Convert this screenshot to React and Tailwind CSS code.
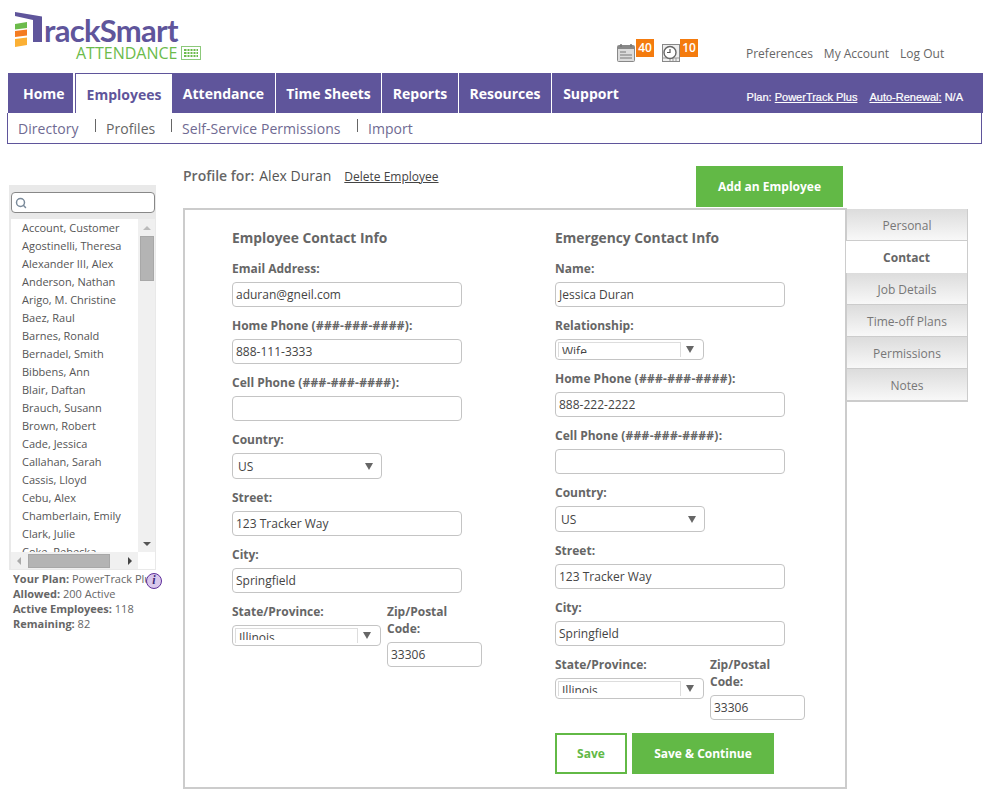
import { Search } from "lucide-react";

const employees = [
  "Account, Customer", "Agostinelli, Theresa", "Alexander III, Alex", "Anderson, Nathan", "Arigo, M. Christine",
  "Baez, Raul", "Barnes, Ronald", "Bernadel, Smith", "Bibbens, Ann", "Blair, Daftan", "Brauch, Susann",
  "Brown, Robert", "Cade, Jessica", "Callahan, Sarah", "Cassis, Lloyd", "Cebu, Alex", "Chamberlain, Emily",
  "Clark, Julie", "Coke, Rebecka",
];

const navItems = [
  { label: "Home", cls: "w-[65px] pl-[15px] bg-[#5f559b] text-white" },
  { label: "Employees", cls: "w-[97px] ml-[2px] justify-center bg-white text-[#5f559b] border-l border-t border-[#5f559b] pt-[2px]" },
  { label: "Attendance", cls: "w-[103px] justify-center bg-[#5f559b] text-white" },
  { label: "Time Sheets", cls: "w-[105px] ml-px justify-center bg-[#5f559b] text-white" },
  { label: "Reports", cls: "w-[76px] ml-px justify-center bg-[#5f559b] text-white" },
  { label: "Resources", cls: "w-[92px] ml-px justify-center bg-[#5f559b] text-white" },
  { label: "Support", cls: "w-[78px] ml-px justify-center bg-[#5f559b] text-white" },
];

const tabs = ["Personal", "Contact", "Job Details", "Time-off Plans", "Permissions", "Notes"];

const Label = ({ children }) => (
  <div className="h-[18px] mb-[5px] text-[12px] leading-[20px] font-bold text-[#666]">{children}</div>
);

const Field = ({ label, value }) => (
  <div className="mb-[9px]">
    <Label>{label}</Label>
    <div className="w-[230px] h-[25px] px-[3px] text-[12px] leading-[23px] text-[#444] bg-white border border-[#c4c4c4] rounded-[4px]">{value}</div>
  </div>
);

const Phone = ({ kind }) => (
  <>{kind} Phone <span className="tracking-[0.3px]">(###-###-####):</span></>
);

const Arrow = () => <span className="w-0 h-0 border-x-[4px] border-x-transparent border-t-[7px] border-t-[#666]" />;

const CountrySelect = ({ label }) => (
  <div className="mb-[9px]">
    <Label>{label}</Label>
    <div className="flex items-center justify-between w-[150px] h-[26px] pl-[5px] pr-[8px] pt-[1px] text-[12px] text-[#444] bg-white border border-[#c4c4c4] rounded-[4px]">
      US
      <Arrow />
    </div>
  </div>
);

const ClippedSelect = ({ value }) => (
  <div className="flex items-center justify-between w-[149px] h-[21px] pl-[2px] pr-[9px] bg-white border border-[#c4c4c4] rounded-[4px]">
    <div className="w-[123px] h-[15px] pl-[3px] border border-b-0 border-[#ddd]">
      <div className="h-[11px] overflow-hidden text-[12px] leading-[18px] text-[#444]">{value}</div>
    </div>
    <Arrow />
  </div>
);

const StateZip = () => (
  <div className="flex">
    <div className="w-[155px]">
      <Label>State/Province:</Label>
      <ClippedSelect value="Illinois" />
    </div>
    <div>
      <div className="h-[35px] mb-[5px] pt-[1px] text-[12px] leading-[17px] font-bold text-[#666]">Zip/Postal<br />Code:</div>
      <div className="w-[95px] h-[25px] px-[3px] text-[12px] leading-[23px] text-[#444] bg-white border border-[#c4c4c4] rounded-[4px]">33306</div>
    </div>
  </div>
);

const Logo = () => (
  <div className="flex items-start w-[200px] pl-[15px] pt-[12px]">
    <svg width="28" height="36" viewBox="0 0 28 36" className="shrink-0">
      <path d="M0 0 L27 4.5 L27 30 L18 30 L18 8 L0 4 Z" fill="#5f559b" />
      <path d="M0 12 L12 10 L12 16 L0 17.5 Z" fill="#6cbb4b" />
      <path d="M0 19 L12 17.5 L12 23.5 L0 25 Z" fill="#f47b20" />
      <path d="M0 27 L12 25.5 L12 33 L0 35 Z" fill="#fbb034" />
    </svg>
    <div className="ml-[1px]">
      <div className="h-[33px] text-[31px] leading-[37px] font-bold tracking-[-0.7px] text-[#5f559b] font-['Lato',sans-serif]">rackSmart</div>
      <div className="flex items-center h-[16px] ml-[32px] whitespace-nowrap">
        <span className="text-[16px] leading-[16px] text-[#6cbb4b]">ATTENDANCE</span>
        <svg width="20" height="14" viewBox="0 0 20 14" className="ml-[4px] shrink-0">
          <rect x="0.5" y="0.5" width="19" height="13" fill="#fff" stroke="#8cc97a" />
          <path d="M3 3h14v2H3zM3 6h14v2H3zM3 9h14v2H3z" fill="#6cbb4b" />
          <path d="M6 3v8M9 3v8M12 3v8M15 3v8" stroke="#fff" />
        </svg>
      </div>
    </div>
  </div>
);

const Badge = ({ children }) => (
  <span className="w-[18px] h-[18px] -mt-[4px] bg-[#f47b0e] text-white text-[12px] leading-[18px] text-center font-semibold">{children}</span>
);

export default function App() {
  return (
    <div className="w-[989px] h-[800px] overflow-hidden bg-white font-['Open_Sans',sans-serif]">
      {/* Header */}
      <div className="flex h-[73px]">
        <Logo />
        <div className="flex items-start pt-[43px] ml-[417px]">
          <svg width="18" height="19" viewBox="0 0 18 19" className="mr-px">
            <rect x="0.5" y="2.5" width="17" height="16" rx="1" fill="#dcdcdc" stroke="#888" />
            <rect x="1" y="3" width="16" height="3" fill="#888" />
            <path d="M3 9h6M3 12h12M3 15h12" stroke="#999" strokeWidth="1.5" />
            <path d="M4 1v3M14 1v3" stroke="#777" strokeWidth="1.5" />
          </svg>
          <Badge>40</Badge>
        </div>
        <div className="flex items-start pt-[43px] ml-[8px]">
          <svg width="18" height="20" viewBox="0 0 18 20">
            <rect x="0.5" y="1.5" width="17" height="17" fill="#eee" stroke="#888" />
            <path d="M1 15h16M8 15v3M11 15v3M14 15v3" stroke="#999" />
            <circle cx="8" cy="9.5" r="6" fill="#fff" stroke="#666" strokeWidth="1.4" />
            <path d="M8 6v3.5H5" fill="none" stroke="#555" strokeWidth="1.2" />
          </svg>
          <Badge>10</Badge>
        </div>
        <div className="flex gap-[11px] ml-[48px] pt-[45px] text-[12px] leading-[18px] text-[#666]">
          <span>Preferences</span>
          <span>My Account</span>
          <span>Log Out</span>
        </div>
      </div>

      {/* Main nav */}
      <div className="flex h-[40px] ml-[8px] w-[975px] bg-[#5f559b]">
        <div className="flex bg-white">
          {navItems.map((item) => (
            <div key={item.label} className={`flex items-center text-[14px] font-bold ${item.cls}`}>{item.label}</div>
          ))}
        </div>
        <div className="flex-1 flex items-center justify-end gap-[12px] pr-[20px] pt-[8px] text-[11px] text-white [-webkit-text-stroke:0.2px_white] font-['Liberation_Sans',sans-serif]">
          <span>Plan: <span className="underline">PowerTrack Plus</span></span>
          <span><span className="underline">Auto-Renewal:</span> N/A</span>
        </div>
      </div>

      {/* Sub nav */}
      <div className="flex items-center h-[31px] ml-[7px] w-[975px] pl-[10px] border border-t-0 border-[#5f559b] text-[14px] tracking-[0.05px] text-[#6f6a92]">
        <span className="w-[77px]">Directory</span>
        <span className="w-px h-[13px] mb-[5px] bg-[#666]" />
        <span className="w-[75px] pl-[10px] text-[#666]">Profiles</span>
        <span className="w-px h-[13px] mb-[5px] bg-[#666]" />
        <span className="w-[185px] pl-[10px] whitespace-nowrap">Self-Service Permissions</span>
        <span className="w-px h-[13px] mb-[5px] bg-[#666]" />
        <span className="pl-[10px]">Import</span>
      </div>

      <div className="flex">
        {/* Sidebar */}
        <div className="w-[153px] ml-[9px] pt-[41px] shrink-0">
          <div className="w-[147px] h-[385px] flex flex-col pt-[7px] pl-[2px] pr-[1px] pb-[1px] bg-[#e9e9e9]">
            <div className="flex items-center h-[21px] shrink-0 pl-[3px] bg-white border border-[#888] rounded-[4px]">
              <Search size={12} strokeWidth={3} className="text-[#7a8a9a]" />
            </div>
            <div className="flex-1 min-h-0 mt-[6px] flex flex-col bg-white">
              <div className="flex flex-1 min-h-0">
                <div className="flex-1 overflow-hidden pl-[11px] text-[11px] leading-[18px] text-[#555]">
                  {employees.map((name) => (
                    <div key={name} className="h-[18px] whitespace-nowrap">{name}</div>
                  ))}
                </div>
                <div className="w-[17px] flex flex-col items-center bg-[#f0f0f0] pt-[7px] pb-[6px]">
                  <span className="w-0 h-0 border-x-[4px] border-x-transparent border-b-[4px] border-b-[#bbb]" />
                  <span className="w-[14px] h-[45px] mt-[6px] bg-[#b4b4b4] border border-[#a8a8a8]" />
                  <span className="mt-auto w-0 h-0 border-x-[4px] border-x-transparent border-t-[4px] border-t-[#555]" />
                </div>
              </div>
              <div className="flex items-center h-[17px] shrink-0">
                <div className="flex items-center w-[127px] h-full bg-[#f0f0f0] pl-[6px]">
                  <span className="w-0 h-0 border-y-[4px] border-y-transparent border-r-[4px] border-r-[#aaa]" />
                  <span className="w-[82px] h-[14px] ml-[7px] bg-[#b4b4b4] border border-[#a8a8a8]" />
                  <span className="ml-auto mr-[6px] w-0 h-0 border-y-[4px] border-y-transparent border-l-[4px] border-l-[#444]" />
                </div>
              </div>
            </div>
          </div>
          <div className="relative w-[137px] ml-[4px] mt-[1px] text-[11px] leading-[15px] text-[#666]">
            <div className="whitespace-nowrap overflow-hidden"><b>Your Plan:</b> PowerTrack Plus</div>
            <div><b>Allowed:</b> 200 Active</div>
            <div className="whitespace-nowrap"><b>Active Employees:</b> 118</div>
            <div><b>Remaining:</b> 82</div>
            <span className="absolute left-[133px] top-[2px] w-[16px] h-[16px] rounded-full bg-[#d9c8ec] border border-[#5f2f9b] text-[#3c2a78] text-[12px] leading-[13px] text-center font-bold italic font-['Liberation_Serif',serif]">i</span>
          </div>
        </div>

        {/* Main column */}
        <div className="ml-[21px] pt-[22px]">
          <div className="flex h-[42px] w-[660px]">
            <div className="flex items-baseline -mt-[1px] h-[20px] text-[#666]">
              <span className="text-[14px] font-semibold">Profile for:</span>
              <span className="ml-[5px] text-[14px] text-[#555]">Alex Duran</span>
              <span className="ml-[13px] text-[12px] text-[#444] underline">Delete Employee</span>
            </div>
            <button className="ml-auto w-[147px] h-[41px] bg-[#62b946] text-white text-[12px] font-bold">Add an Employee</button>
          </div>
          <div className="flex items-start">
            <div className="grid grid-cols-[323px_1fr] w-[664px] h-[581px] pt-[18px] pl-[47px] border-2 border-[#ccc]">
              <div>
                <div className="h-[20px] mb-[11px] text-[13.8px] leading-[20px] font-bold text-[#666]">Employee Contact Info</div>
                <Field label="Email Address:" value="aduran@gneil.com" />
                <Field label={<Phone kind="Home" />} value="888-111-3333" />
                <Field label={<Phone kind="Cell" />} value="" />
                <CountrySelect label="Country:" />
                <Field label="Street:" value="123 Tracker Way" />
                <Field label="City:" value="Springfield" />
                <StateZip />
              </div>
              <div>
                <div className="h-[20px] mb-[11px] text-[13.8px] leading-[20px] font-bold text-[#666]">Emergency Contact Info</div>
                <Field label="Name:" value="Jessica Duran" />
                <div className="mb-[9px]">
                  <Label>Relationship:</Label>
                  <ClippedSelect value="Wife" />
                </div>
                <Field label={<Phone kind="Home" />} value="888-222-2222" />
                <Field label={<Phone kind="Cell" />} value="" />
                <CountrySelect label="Country:" />
                <Field label="Street:" value="123 Tracker Way" />
                <Field label="City:" value="Springfield" />
                <StateZip />
                <div className="flex gap-[5px] mt-[13px]">
                  <button className="w-[72px] h-[41px] border-2 border-[#62b946] text-[#62b946] text-[12px] font-bold">Save</button>
                  <button className="w-[142px] h-[41px] bg-[#62b946] text-white text-[12px] font-bold">Save &amp; Continue</button>
                </div>
              </div>
            </div>
            <div className="w-[122px] -ml-[1px] mt-[1px] border-r border-b border-[#ccc]">
              {tabs.map((tab) => (
                tab === "Contact" ? (
                  <div key={tab} className="h-[32px] bg-white text-[12px] leading-[34px] text-center font-bold text-[#666]">{tab}</div>
                ) : (
                  <div key={tab} className="h-[32px] bg-gradient-to-b from-[#dcdcdc] to-[#f8f8f8] border-l border-b border-[#ccc] text-[12px] leading-[33px] text-center text-[#777]">{tab}</div>
                )
              ))}
            </div>
          </div>
        </div>
      </div>
    </div>
  );
}
